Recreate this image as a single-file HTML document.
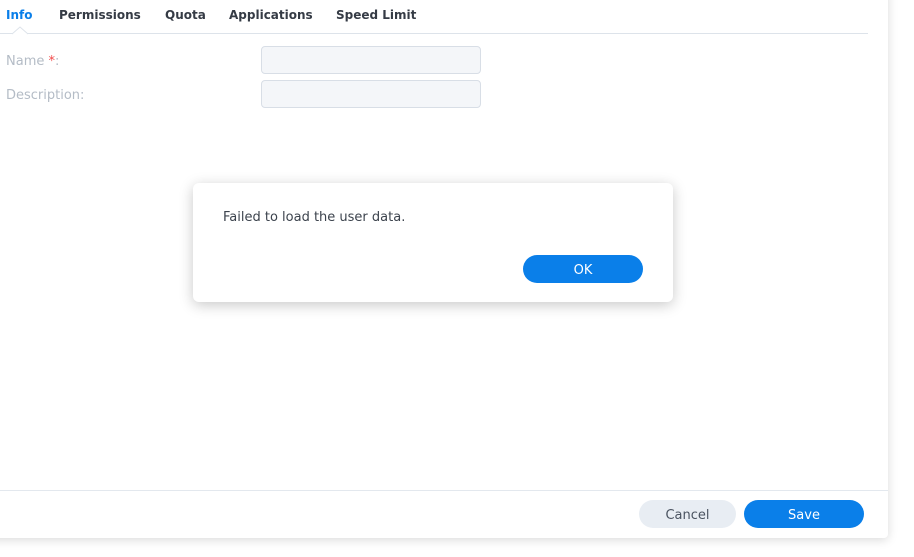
<!DOCTYPE html>
<html><head><meta charset="utf-8"><style>
*{margin:0;padding:0;box-sizing:border-box}
body{width:914px;height:557px;background:#fff;font-family:"DejaVu Sans","Liberation Sans",sans-serif;position:relative;overflow:hidden}
.win{position:absolute;left:-10px;top:-10px;width:898px;height:548px;background:#fff;box-shadow:0 2px 10px rgba(0,0,0,.15);border-radius:0 0 4px 0}
.tabs{position:absolute;left:0;top:0;height:34px;width:868px;border-bottom:1px solid #dde3ea}
.tab{position:absolute;top:8px;font-size:12px;font-weight:bold;color:#353b45}
.lbl{position:absolute;left:6px;font-size:13px;color:#b4bcc6}
.inp{position:absolute;left:261px;width:220px;height:28px;background:#f4f6f9;border:1px solid #d8dee6;border-radius:4px}
.foot{position:absolute;left:0;top:490px;width:888px;border-top:1px solid #e3e8ee}
.btn{position:absolute;height:28px;border-radius:14px;font-size:13px;text-align:center;line-height:31px}
.dlg{position:absolute;left:193px;top:183px;width:480px;height:119px;background:#fff;border-radius:6px;box-shadow:0 3px 14px rgba(0,0,0,.22)}
</style></head><body>
<div class="win"></div>
<div class="tabs">
<span class="tab" style="left:6px;color:#0a7fe9">Info</span>
<span class="tab" style="left:59px">Permissions</span>
<span class="tab" style="left:165px">Quota</span>
<span class="tab" style="left:229px">Applications</span>
<span class="tab" style="left:336px">Speed Limit</span>
</div>
<svg style="position:absolute;left:12px;top:26px" width="16" height="9"><path d="M0 8 L8 1 L16 8" fill="#fff" stroke="#dde3ea" stroke-width="1"/></svg>
<div class="lbl" style="top:54px">Name <span style="color:#f24a4a">*</span>:</div>
<div class="lbl" style="top:88px">Description:</div>
<div class="inp" style="top:46px"></div>
<div class="inp" style="top:80px"></div>
<div class="foot"></div>
<div class="btn" style="left:639px;top:500px;width:97px;background:#e8edf3;color:#4a5360">Cancel</div>
<div class="btn" style="left:744px;top:500px;width:120px;background:#0a7fe9;color:#fff">Save</div>
<div class="dlg">
<div style="position:absolute;left:30px;top:27px;font-size:13px;color:#3c434d">Failed to load the user data.</div>
<div class="btn" style="left:330px;top:72px;width:120px;background:#0a7fe9;color:#fff">OK</div>
</div>
</body></html>
